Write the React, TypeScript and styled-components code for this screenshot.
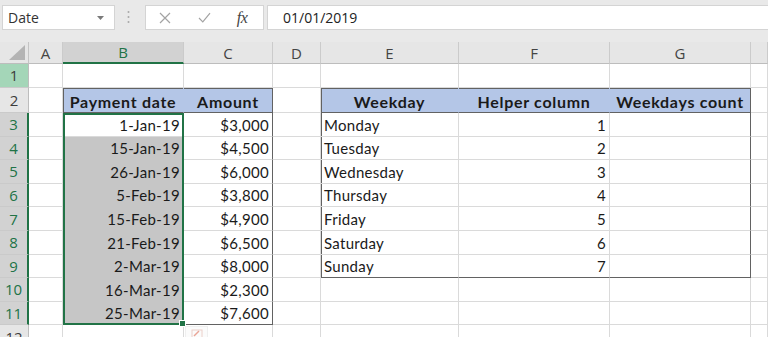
import React from "react";
import styled, { createGlobalStyle } from "styled-components";

const GRID = "#dadada";
const EDGE = "#626262";
const GREEN = "#217346";
const BLUE = "#b4c6e7";
const SELGRAY = "#c6c6c6";

type Align = "left" | "right" | "center";

interface Spec {
  v?: string;
  align?: Align;
  bold?: boolean;
  fill?: string;
  sel?: boolean;
  t?: boolean;
  l?: boolean;
  rt?: boolean;
  b?: boolean;
}

const payments = [
  ["1-Jan-19", "$3,000"],
  ["15-Jan-19", "$4,500"],
  ["26-Jan-19", "$6,000"],
  ["5-Feb-19", "$3,800"],
  ["15-Feb-19", "$4,900"],
  ["21-Feb-19", "$6,500"],
  ["2-Mar-19", "$8,000"],
  ["16-Mar-19", "$2,300"],
  ["25-Mar-19", "$7,600"],
];

const weekdays = ["Monday", "Tuesday", "Wednesday", "Thursday", "Friday", "Saturday", "Sunday"];

const colLetters = ["A", "B", "C", "D", "E", "F", "G", ""];

function specFor(row: number, col: number): Spec {
  const letter = "ABCDEFGH"[col];
  if (row === 2) {
    const head: Record<string, Spec> = {
      B: { v: "Payment date", l: true },
      C: { v: "Amount", rt: true },
      E: { v: "Weekday", l: true },
      F: { v: "Helper column" },
      G: { v: "Weekdays count", rt: true },
    };
    const h = head[letter];
    if (h) return { ...h, align: "center", bold: true, fill: BLUE, t: true, b: true };
  }
  const p = row >= 3 ? payments[row - 3] : undefined;
  if (p && letter === "B") return { v: p[0], align: "right", l: true, sel: row > 3, b: row === 11 };
  if (p && letter === "C") return { v: p[1], align: "right", rt: true, b: row === 11 };
  const w = row >= 3 ? weekdays[row - 3] : undefined;
  if (w && letter === "E") return { v: w, align: "left", l: true, b: row === 9 };
  if (w && letter === "F") return { v: String(row - 2), align: "right", b: row === 9 };
  if (w && letter === "G") return { rt: true, b: row === 9 };
  return {};
}

const GlobalStyle = createGlobalStyle`
  html, body {
    margin: 0;
    padding: 0;
    overflow: hidden;
    background: #ffffff;
  }
`;

const Page = styled.div`
  width: 768px;
  height: 337px;
  overflow: hidden;
  background: #e9e9e9;
  font-family: "Open Sans", "Noto Sans", sans-serif;
`;

const Toolbar = styled.div`
  height: 42px;
  box-sizing: border-box;
  display: flex;
  align-items: flex-start;
  padding: 5px 0 0 2px;
  background: #e9e9e9;
`;

const NameBox = styled.div`
  width: 113px;
  height: 25px;
  box-sizing: border-box;
  display: flex;
  align-items: center;
  justify-content: space-between;
  padding: 0 10px 0 5px;
  background: #fff;
  border: 1px solid #d4d4d4;
  font-size: 14px;
  color: #333;
`;

const Grip = styled.svg`
  margin: 5px 15px 0 12px;
`;

const FxGroup = styled.div`
  width: 119px;
  height: 25px;
  box-sizing: border-box;
  display: flex;
  align-items: center;
  background: #fff;
  border: 1px solid #d4d4d4;
`;

const FxSlot = styled.span<{ $w: number }>`
  width: ${(p) => p.$w}px;
  display: flex;
  justify-content: center;
  align-items: center;
`;

const FxText = styled.span`
  font-family: "Liberation Serif", "DejaVu Serif", serif;
  font-style: italic;
  font-size: 16px;
  color: #444;
  letter-spacing: -0.5px;
`;

const FormulaInput = styled.div`
  flex: 1;
  height: 25px;
  box-sizing: border-box;
  margin-left: 3px;
  padding-left: 15px;
  display: flex;
  align-items: center;
  background: #fff;
  border: 1px solid #d4d4d4;
  border-right: none;
  font-size: 14px;
  color: #222;
`;

const Sheet = styled.div`
  display: grid;
  grid-template-columns: 29px 34px 121px 89px 48px 138px 151px 141px 1fr;
  grid-template-rows: 22px 23.5px 25.5px repeat(10, 23.6px);
  background: #fff;
`;

const Corner = styled.div`
  grid-row: 1;
  grid-column: 1;
  box-sizing: border-box;
  display: flex;
  align-items: flex-end;
  justify-content: flex-end;
  padding: 0 3px 3px 0;
  background: #e6e6e6;
  border-right: 1px solid #c4c4c4;
  border-bottom: 1px solid #bdbdbd;
`;

const ColHead = styled.div<{ $c: number; $active?: boolean }>`
  grid-row: 1;
  grid-column: ${(p) => p.$c};
  box-sizing: border-box;
  display: flex;
  align-items: center;
  justify-content: center;
  background: ${(p) => (p.$active ? "#d2d2d2" : "#e6e6e6")};
  color: ${(p) => (p.$active ? GREEN : "#444")};
  border-right: 1px solid #cbcbcb;
  border-bottom: ${(p) => (p.$active ? `2px solid ${GREEN}` : "1px solid #bdbdbd")};
  font-size: 15px;
`;

type RowMode = "plain" | "sel" | "mint";

const RowHead = styled.div<{ $r: number; $mode: RowMode }>`
  grid-row: ${(p) => p.$r};
  grid-column: 1;
  box-sizing: border-box;
  display: flex;
  align-items: center;
  justify-content: center;
  background: ${(p) => (p.$mode === "sel" ? "#d2d2d2" : p.$mode === "mint" ? "#a4d6b8" : "#e6e6e6")};
  color: ${(p) => (p.$mode === "sel" ? GREEN : "#3c3c3c")};
  border-bottom: 1px solid #cacaca;
  border-right: ${(p) => (p.$mode === "sel" ? `2px solid ${GREEN}` : "1px solid #bdbdbd")};
  font-size: 15px;
`;

const Cell = styled.div<{
  $r: number;
  $c: number;
  $align?: Align;
  $bold?: boolean;
  $fill?: string;
  $sel?: boolean;
  $t?: boolean;
  $l?: boolean;
  $rt?: boolean;
  $b?: boolean;
}>`
  grid-row: ${(p) => p.$r};
  grid-column: ${(p) => p.$c};
  box-sizing: border-box;
  display: flex;
  align-items: flex-end;
  justify-content: ${(p) =>
    p.$align === "right" ? "flex-end" : p.$align === "center" ? "center" : "flex-start"};
  padding: 0 3px 1px 3px;
  background: ${(p) => (p.$sel ? SELGRAY : p.$fill || "#fff")};
  border-right: 1px solid ${(p) => (p.$rt ? EDGE : p.$sel ? SELGRAY : p.$fill || GRID)};
  border-bottom: 1px solid ${(p) => (p.$b ? EDGE : p.$sel ? SELGRAY : GRID)};
  box-shadow: inset ${(p) => (p.$l ? 1 : 0)}px ${(p) => (p.$t ? 1 : 0)}px 0 0 ${EDGE};
  font-family: "Lato", "Open Sans", sans-serif;
  font-size: ${(p) => (p.$bold ? 16 : 15)}px;
  letter-spacing: ${(p) => (p.$bold ? 0.7 : 0.3)}px;
  line-height: 19px;
  font-weight: ${(p) => (p.$bold ? 700 : 400)};
  color: #1a1a1a;
  white-space: nowrap;
`;

const Selection = styled.div`
  grid-row: 4 / 13;
  grid-column: 3;
  position: relative;
  box-sizing: border-box;
  border: 2px solid ${GREEN};
  pointer-events: none;
  z-index: 2;
`;

const FillHandle = styled.div`
  position: absolute;
  right: -3px;
  bottom: -3px;
  width: 5px;
  height: 5px;
  background: ${GREEN};
  outline: 1px solid #fff;
`;

const QuickAnalysis = styled.div`
  position: absolute;
  left: calc(100% + 3px);
  top: calc(100% + 3px);
  width: 23px;
  height: 20px;
  box-sizing: border-box;
  border: 1px solid #ececec;
  background: #fbfbfb;
  display: flex;
  justify-content: center;
  padding-top: 2px;
  opacity: 0.8;
`;

export default function App() {
  const cells: React.ReactNode[] = [];
  for (let r = 1; r <= 12; r++) {
    const mode: RowMode = r === 1 ? "mint" : r >= 3 && r <= 11 ? "sel" : "plain";
    cells.push(
      <RowHead key={`rh${r}`} $r={r + 1} $mode={mode}>
        {r}
      </RowHead>
    );
    for (let c = 0; c < 8; c++) {
      const s = specFor(r, c);
      cells.push(
        <Cell
          key={`c${r}-${c}`}
          $r={r + 1}
          $c={c + 2}
          $align={s.align}
          $bold={s.bold}
          $fill={s.fill}
          $sel={s.sel}
          $t={s.t}
          $l={s.l}
          $rt={s.rt}
          $b={s.b}
        >
          {s.v}
        </Cell>
      );
    }
  }

  return (
    <Page>
      <GlobalStyle />
      <Toolbar>
        <NameBox>
          <span>Date</span>
          <svg width="7" height="4" viewBox="0 0 7 4">
            <polygon points="0,0 7,0 3.5,4" fill="#7a7a7a" />
          </svg>
        </NameBox>
        <Grip width="3" height="14" viewBox="0 0 3 14">
          <circle cx="1.5" cy="2" r="1" fill="#a8a8a8" />
          <circle cx="1.5" cy="7" r="1" fill="#a8a8a8" />
          <circle cx="1.5" cy="12" r="1" fill="#a8a8a8" />
        </Grip>
        <FxGroup>
          <FxSlot $w={38}>
            <svg width="12" height="12" viewBox="0 0 12 12">
              <path d="M1 1 L11 11 M11 1 L1 11" stroke="#a3a3a3" strokeWidth="1.2" fill="none" />
            </svg>
          </FxSlot>
          <FxSlot $w={40}>
            <svg width="13" height="11" viewBox="0 0 13 11">
              <path d="M1 6 L4.8 9.8 L12 1.2" stroke="#a3a3a3" strokeWidth="1.2" fill="none" />
            </svg>
          </FxSlot>
          <FxSlot $w={36}>
            <FxText>fx</FxText>
          </FxSlot>
        </FxGroup>
        <FormulaInput>01/01/2019</FormulaInput>
      </Toolbar>
      <Sheet>
        <Corner>
          <svg width="16" height="15" viewBox="0 0 16 15">
            <polygon points="16,0 16,15 0,15" fill="#b4b4b4" />
          </svg>
        </Corner>
        {colLetters.map((l, i) => (
          <ColHead key={`h${i}`} $c={i + 2} $active={l === "B"}>
            {l}
          </ColHead>
        ))}
        {cells}
        <Selection>
          <FillHandle />
          <QuickAnalysis>
            <svg width="12" height="10" viewBox="0 0 12 10">
              <rect x="1" y="1" width="10" height="8" fill="none" stroke="#e8c4bd" strokeWidth="1" />
              <path d="M3 7 L8 2" stroke="#e58e7c" strokeWidth="1.5" />
            </svg>
          </QuickAnalysis>
        </Selection>
      </Sheet>
    </Page>
  );
}
